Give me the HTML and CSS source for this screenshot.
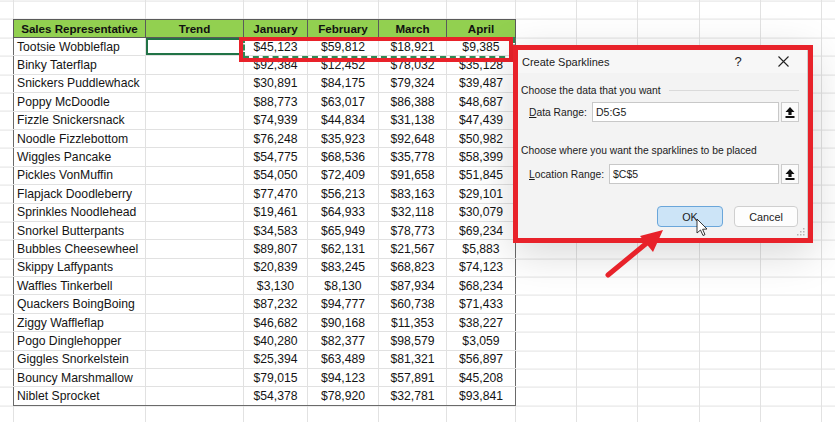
FILE: index.html
```html
<!DOCTYPE html>
<html lang="en">
<head>
<meta charset="utf-8">
<title>Create Sparklines</title>
<link rel="stylesheet" href="styles.css">
</head>
<body>
<div class="sheet">
  <table class="grid">
    <colgroup>
      <col class="c-name"><col class="c-trend"><col class="c-jan"><col class="c-feb"><col class="c-mar"><col class="c-apr">
    </colgroup>
    <thead>
      <tr><th>Sales Representative</th><th>Trend</th><th>January</th><th>February</th><th>March</th><th>April</th></tr>
    </thead>
    <tbody>
      <tr><td class="nm">Tootsie Wobbleflap</td><td class="sel"></td><td>$45,123</td><td>$59,812</td><td>$18,921</td><td>$9,385</td></tr>
      <tr><td class="nm">Binky Taterflap</td><td></td><td>$92,384</td><td>$12,452</td><td>$78,032</td><td>$35,128</td></tr>
      <tr><td class="nm">Snickers Puddlewhack</td><td></td><td>$30,891</td><td>$84,175</td><td>$79,324</td><td>$39,487</td></tr>
      <tr><td class="nm">Poppy McDoodle</td><td></td><td>$88,773</td><td>$63,017</td><td>$86,388</td><td>$48,687</td></tr>
      <tr><td class="nm">Fizzle Snickersnack</td><td></td><td>$74,939</td><td>$44,834</td><td>$31,138</td><td>$47,439</td></tr>
      <tr><td class="nm">Noodle Fizzlebottom</td><td></td><td>$76,248</td><td>$35,923</td><td>$92,648</td><td>$50,982</td></tr>
      <tr><td class="nm">Wiggles Pancake</td><td></td><td>$54,775</td><td>$68,536</td><td>$35,778</td><td>$58,399</td></tr>
      <tr><td class="nm">Pickles VonMuffin</td><td></td><td>$54,050</td><td>$72,409</td><td>$91,658</td><td>$51,845</td></tr>
      <tr><td class="nm">Flapjack Doodleberry</td><td></td><td>$77,470</td><td>$56,213</td><td>$83,163</td><td>$29,101</td></tr>
      <tr><td class="nm">Sprinkles Noodlehead</td><td></td><td>$19,461</td><td>$64,933</td><td>$32,118</td><td>$30,079</td></tr>
      <tr><td class="nm">Snorkel Butterpants</td><td></td><td>$34,583</td><td>$65,949</td><td>$78,773</td><td>$69,234</td></tr>
      <tr><td class="nm">Bubbles Cheesewheel</td><td></td><td>$89,807</td><td>$62,131</td><td>$21,567</td><td>$5,883</td></tr>
      <tr><td class="nm">Skippy Laffypants</td><td></td><td>$20,839</td><td>$83,245</td><td>$68,823</td><td>$74,123</td></tr>
      <tr><td class="nm">Waffles Tinkerbell</td><td></td><td>$3,130</td><td>$8,130</td><td>$87,934</td><td>$68,234</td></tr>
      <tr><td class="nm">Quackers BoingBoing</td><td></td><td>$87,232</td><td>$94,777</td><td>$60,738</td><td>$71,433</td></tr>
      <tr><td class="nm">Ziggy Waffleflap</td><td></td><td>$46,682</td><td>$90,168</td><td>$11,353</td><td>$38,227</td></tr>
      <tr><td class="nm">Pogo Dinglehopper</td><td></td><td>$40,280</td><td>$82,377</td><td>$98,579</td><td>$3,059</td></tr>
      <tr><td class="nm">Giggles Snorkelstein</td><td></td><td>$25,394</td><td>$63,489</td><td>$81,321</td><td>$56,897</td></tr>
      <tr><td class="nm">Bouncy Marshmallow</td><td></td><td>$79,015</td><td>$94,123</td><td>$57,891</td><td>$45,208</td></tr>
      <tr><td class="nm">Niblet Sprocket</td><td></td><td>$54,378</td><td>$78,920</td><td>$32,781</td><td>$93,841</td></tr>
    </tbody>
  </table>

  <div class="ants"></div>
  <div class="highlight"></div>

  <div class="dialog-frame">
    <div class="dialog">
      <div class="title-bar">
        <span class="title">Create Sparklines</span>
        <span class="help">?</span>
        <svg class="close" width="11" height="11" viewBox="0 0 11 11"><path d="M0.5 0.5 L10.5 10.5 M10.5 0.5 L0.5 10.5" stroke="#222" stroke-width="1.1" fill="none"/></svg>
      </div>
      <div class="group-label g1"><span>Choose the data that you want</span><i class="rule"></i></div>
      <div class="field f1">
        <label class="lbl lbl-data"><u>D</u>ata Range:</label>
        <div class="input">D5:G5</div>
        <div class="pick"><svg width="10" height="11" viewBox="0 0 10 11"><path d="M5 0 L9.5 5 L6.6 5 L6.6 8 L3.4 8 L3.4 5 L0.5 5 Z" fill="#111"/><rect x="0.5" y="9" width="9" height="2" fill="#111"/></svg></div>
      </div>
      <div class="group-label g2"><span>Choose where you want the sparklines to be placed</span></div>
      <div class="field f2">
        <label class="lbl lbl-loc"><u>L</u>ocation Range:</label>
        <div class="input">$C$5</div>
        <div class="pick"><svg width="10" height="11" viewBox="0 0 10 11"><path d="M5 0 L9.5 5 L6.6 5 L6.6 8 L3.4 8 L3.4 5 L0.5 5 Z" fill="#111"/><rect x="0.5" y="9" width="9" height="2" fill="#111"/></svg></div>
      </div>
      <div class="buttons">
        <div class="btn ok">OK</div>
        <div class="btn cancel">Cancel</div>
      </div>
      <svg class="grip" width="9" height="9" viewBox="0 0 9 9"><g fill="#b5b5b5"><rect x="7" y="1" width="1.5" height="1.5"/><rect x="4" y="4" width="1.5" height="1.5"/><rect x="7" y="4" width="1.5" height="1.5"/><rect x="1" y="7" width="1.5" height="1.5"/><rect x="4" y="7" width="1.5" height="1.5"/><rect x="7" y="7" width="1.5" height="1.5"/></g></svg>
    </div>
  </div>

  <svg class="arrow" width="835" height="422" viewBox="0 0 835 422">
    <line x1="608" y1="275" x2="648" y2="242" stroke="#e8222a" stroke-width="5" stroke-linecap="round"/>
    <polygon points="663,230 640,236 653,252" fill="#e8222a"/>
    <path d="M697 219 L697 233 L700.5 230 L703 235.5 L705 234.6 L702.6 229.3 L707 229 Z" fill="#fff" stroke="#222" stroke-width="0.9" stroke-linejoin="round"/>
  </svg>
</div>
</body>
</html>
```
FILE: styles.css
```css
html, body {
  margin: 0;
  padding: 0;
  background: #ffffff;
}

body {
  font-family: "Liberation Sans", Arial, sans-serif;
  color: #1e1e1e;
}

.sheet {
  position: relative;
  width: 835px;
  height: 422px;
  overflow: hidden;
  box-sizing: border-box;
  padding: 19px 0 0 13px;
  background-color: #ffffff;
  background-image:
    linear-gradient(#e2e2e2, #e2e2e2),
    linear-gradient(#e2e2e2, #e2e2e2),
    linear-gradient(#e2e2e2, #e2e2e2),
    linear-gradient(#e2e2e2, #e2e2e2),
    linear-gradient(#e2e2e2, #e2e2e2),
    linear-gradient(#e2e2e2, #e2e2e2),
    linear-gradient(#e2e2e2, #e2e2e2),
    linear-gradient(#e2e2e2, #e2e2e2),
    linear-gradient(#e2e2e2, #e2e2e2),
    linear-gradient(#e2e2e2, #e2e2e2),
    linear-gradient(#e2e2e2, #e2e2e2),
    linear-gradient(#e2e2e2, #e2e2e2),
    repeating-linear-gradient(to bottom, #e2e2e2 0, #e2e2e2 1px, transparent 1px, transparent 18.4px);
  background-size:
    1px 100%, 1px 100%, 1px 100%, 1px 100%, 1px 100%, 1px 100%,
    1px 100%, 1px 100%, 1px 100%, 1px 100%, 1px 100%, 1px 100%,
    100% 100%;
  background-position:
    13px 0, 145px 0, 243px 0, 307px 0, 378px 0, 446px 0,
    515px 0, 576px 0, 637px 0, 699px 0, 760px 0, 821px 0,
    0 0.6px;
  background-repeat: no-repeat, no-repeat, no-repeat, no-repeat, no-repeat, no-repeat,
    no-repeat, no-repeat, no-repeat, no-repeat, no-repeat, no-repeat, repeat;
}

/* ---------- spreadsheet table ---------- */
.grid {
  border-collapse: collapse;
  table-layout: fixed;
  width: 503px;
  background: #ffffff;
}

.c-name { width: 132px; }
.c-trend { width: 98px; }
.c-jan { width: 64px; }
.c-feb { width: 71px; }
.c-mar { width: 68px; }
.c-apr { width: 69px; }

.grid th,
.grid td {
  box-sizing: border-box;
  height: 18.4px;
  padding: 0 3px;
  border: 1px solid #e1e1e1;
  white-space: nowrap;
  overflow: hidden;
  line-height: 16px;
  font-size: 12.2px;
  text-align: center;
  color: #141414;
}

.grid th {
  height: 18px;
  background: #92d050;
  border-color: #5a5a5a;
  font-weight: bold;
  font-size: 11.6px;
  color: #111111;
}

.grid td.nm {
  text-align: left;
  font-size: 12.2px;
  padding-left: 3px;
}

.grid td:first-child { border-left-color: #6a6a6a; }
.grid td:last-child { border-right-color: #6a6a6a; }
.grid tbody tr:last-child td { border-bottom-color: #6a6a6a; }

.grid td.sel {
  box-shadow: inset 0 0 0 2px #217346;
}

/* ---------- copy marquee + highlight ---------- */
.ants {
  position: absolute;
  left: 243px;
  top: 37px;
  width: 268px;
  height: 17px;
  border: 2px dashed #2f8a55;
}

.highlight {
  position: absolute;
  left: 239px;
  top: 37px;
  width: 266px;
  height: 17px;
  border: 4px solid #e8222a;
}

/* ---------- dialog ---------- */
.dialog-frame {
  position: absolute;
  left: 513px;
  top: 45px;
  width: 290px;
  height: 188px;
  border: 5px solid #e8222a;
  box-shadow: 0 10px 40px rgba(0, 0, 0, 0.16);
}

.dialog {
  position: relative;
  box-sizing: border-box;
  width: 290px;
  height: 188px;
  background: #f3f3f3;
  border-right: 1px solid #cfcfcf;
  font-family: "Liberation Sans", Arial, sans-serif;
  font-size: 10.3px;
  color: #1b1b1b;
}

.title-bar {
  display: flex;
  align-items: center;
  height: 23px;
  padding-left: 4px;
  background: #f7f7f7;
}

.title {
  font-size: 11px;
  flex: 1;
}

.help {
  font-size: 13px;
  width: 12px;
  text-align: center;
  margin-right: 34px;
}

.close {
  margin-right: 18px;
}

.group-label {
  display: flex;
  align-items: center;
  height: 14px;
  padding: 0 8px 0 3px;
  white-space: nowrap;
}

.group-label .rule {
  flex: 1;
  height: 1px;
  background: #dadada;
  margin-left: 8px;
}

.g1 { margin-top: 10px; }
.g2 { margin-top: 21px; }

.field {
  display: flex;
  align-items: center;
  height: 20px;
  padding-left: 11px;
}

.f1 { margin-top: 5px; }
.f2 { margin-top: 7px; }

.lbl {
  flex-shrink: 0;
  white-space: nowrap;
}

.lbl-data { width: 63px; }
.lbl-loc { width: 80px; }

.input {
  box-sizing: border-box;
  height: 20px;
  flex: 1;
  background: #ffffff;
  border: 1px solid #c8c8c8;
  padding-left: 3px;
  line-height: 18px;
  font-size: 10.5px;
}

.pick {
  box-sizing: border-box;
  flex-shrink: 0;
  width: 18px;
  height: 20px;
  margin: 0 8px 0 2px;
  background: #fbfbfb;
  border: 1px solid #cccccc;
  display: flex;
  align-items: center;
  justify-content: center;
}

.buttons {
  display: flex;
  justify-content: flex-end;
  gap: 11px;
  margin-top: 22px;
  padding-right: 9px;
}

.btn {
  box-sizing: border-box;
  height: 21px;
  border-radius: 4px;
  display: flex;
  align-items: center;
  justify-content: center;
  font-size: 10.8px;
}

.ok {
  width: 66px;
  background: #cce4f7;
  border: 1px solid #6aa6da;
}

.cancel {
  width: 64px;
  background: #fdfdfd;
  border: 1px solid #cfcfcf;
}

.grip {
  position: absolute;
  right: 2px;
  bottom: 2px;
}

.arrow {
  position: absolute;
  left: 0;
  top: 0;
  pointer-events: none;
}
```
